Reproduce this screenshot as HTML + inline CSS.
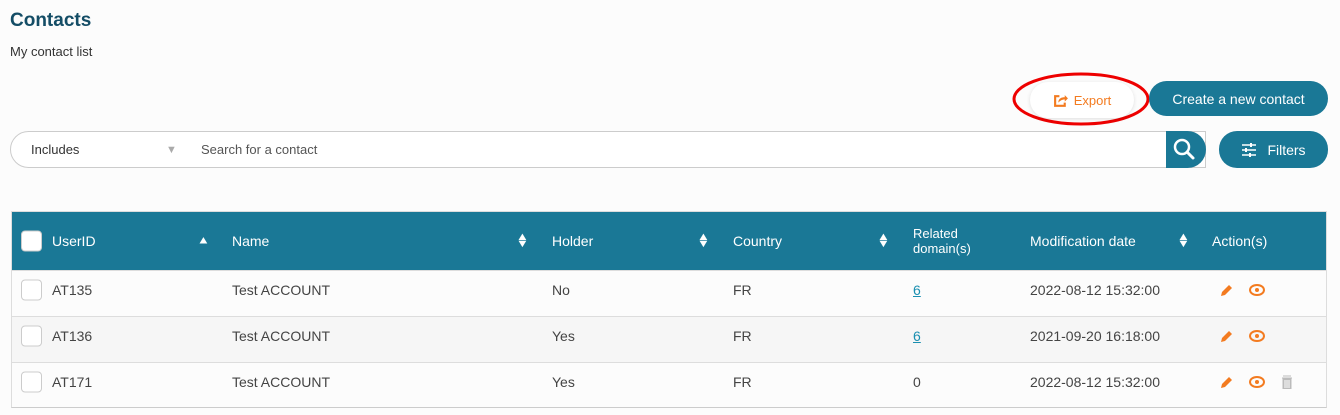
<!DOCTYPE html>
<html><head><meta charset="utf-8"><style>
*{box-sizing:border-box;margin:0;padding:0}
body{width:1340px;height:415px;background:#fcfcfc;font-family:"Liberation Sans",sans-serif;color:#333;position:relative;overflow:hidden}
.abs{position:absolute}
h1{position:absolute;left:10px;top:10px;font-size:19px;font-weight:bold;color:#144d66}
.sub{left:10px;top:44px;font-size:13px;color:#333}
.btn{position:absolute;border-radius:18px;font-size:14px;display:flex;align-items:center;justify-content:center}
.teal{background:#1a7896;color:#fff}
.search{left:10px;top:131px;width:1196px;height:37px;border:1px solid #ccc;border-radius:19px 0 0 19px;background:#fff}
.tbl{left:11px;top:211px;width:1316px;height:197px;border:1px solid #ddd;border-bottom:1px solid #ccc;background:#fcfcfc;overflow:hidden}
.hdr{position:absolute;left:0;top:0;width:100%;height:58px;background:#1a7896;color:#fff;font-size:14px}
.row{position:absolute;left:0;width:100%;height:46px;border-top:1px solid #ddd;font-size:14px;color:#444}
.c{position:absolute;top:50%;transform:translateY(-50%)}
.row .c{top:43%}
.cb{width:21px;height:21px;border-radius:4px;background:#fff;border:1px solid #ccc}
.sort{font-size:11px;line-height:7px;color:#fff;transform:translateY(-50%) scaleX(1.2)}
</style></head><body>
<h1>Contacts</h1>
<div class="abs sub">My contact list</div>
<svg class="abs" style="left:1011px;top:72px" width="140" height="55"><ellipse cx="70" cy="27" rx="67" ry="25" fill="none" stroke="#e00" stroke-width="3"/></svg>
<div class="btn" style="left:1030px;top:82px;width:104px;height:36px;background:#fff;box-shadow:0 1px 4px rgba(0,0,0,.12);color:#f37b20;font-size:13px">
<svg width="16" height="15" viewBox="0 0 15 14" style="margin-right:5px"><path d="M6 3H2v9h9V9" fill="none" stroke="#f37b20" stroke-width="2"/><path d="M5 9c0-4 3-5 6-5V2l3 3-3 3V6c-2 0-4 1-6 3z" fill="#f37b20"/></svg>Export</div>
<div class="btn teal" style="left:1149px;top:81px;width:179px;height:35px">Create a new contact</div>
<div class="abs search"><span class="abs" style="left:20px;top:10px;font-size:13px;color:#333">Includes</span><span class="abs" style="left:155px;top:12px;font-size:11px;color:#aaa">▼</span><span class="abs" style="left:190px;top:10px;font-size:13px;color:#555">Search for a contact</span></div>
<div class="abs" style="left:1166px;top:131px;width:40px;height:37px;background:#1a7896;border-radius:0 19px 19px 0"><svg width="40" height="37"><circle cx="16" cy="16" r="7" fill="none" stroke="#fff" stroke-width="2.5"/><path d="M21 21l6 6" stroke="#fff" stroke-width="3" stroke-linecap="round"/></svg></div>
<div class="btn teal" style="left:1219px;top:131px;width:109px;height:37px"><svg width="16" height="14" style="margin-right:10px"><path d="M1 2h14M1 7h14M1 12h14" stroke="#fff" stroke-width="1.5"/><path d="M10 0v4M5 5v4M9 10v4" stroke="#fff" stroke-width="2"/></svg>Filters</div>
<div class="abs tbl">
<div class="hdr">
<div class="c cb" style="left:9px"></div>
<span class="c" style="left:40px">UserID</span><span class="c sort" style="left:186px">▲</span>
<span class="c" style="left:220px">Name</span><span class="c sort" style="left:505px">▲<br>▼</span>
<span class="c" style="left:540px">Holder</span><span class="c sort" style="left:686px">▲<br>▼</span>
<span class="c" style="left:721px">Country</span><span class="c sort" style="left:866px">▲<br>▼</span>
<span class="c" style="left:901px;font-size:13px;line-height:15px">Related<br>domain(s)</span>
<span class="c" style="left:1018px">Modification date</span><span class="c sort" style="left:1166px">▲<br>▼</span>
<span class="c" style="left:1200px">Action(s)</span>
</div>
<div class="row" style="top:58px;background:#fcfcfc">
<div class="c cb" style="left:9px"></div><span class="c" style="left:40px">AT135</span><span class="c" style="left:220px">Test ACCOUNT</span><span class="c" style="left:540px">No</span><span class="c" style="left:721px">FR</span><span class="c" style="left:901px;color:#1a8fb0;text-decoration:underline">6</span><span class="c" style="left:1018px">2022-08-12 15:32:00</span>
<svg class="c" style="left:1207px" width="80" height="14"><path d="M2 13l1-4 7-7 3 3-7 7z" fill="#f37b20"/><ellipse cx="38" cy="7" rx="7" ry="5" fill="none" stroke="#f37b20" stroke-width="2"/><circle cx="38" cy="7" r="2" fill="#f37b20"/></svg></div>
<div class="row" style="top:104px;background:#f6f6f6">
<div class="c cb" style="left:9px"></div><span class="c" style="left:40px">AT136</span><span class="c" style="left:220px">Test ACCOUNT</span><span class="c" style="left:540px">Yes</span><span class="c" style="left:721px">FR</span><span class="c" style="left:901px;color:#1a8fb0;text-decoration:underline">6</span><span class="c" style="left:1018px">2021-09-20 16:18:00</span>
<svg class="c" style="left:1207px" width="80" height="14"><path d="M2 13l1-4 7-7 3 3-7 7z" fill="#f37b20"/><ellipse cx="38" cy="7" rx="7" ry="5" fill="none" stroke="#f37b20" stroke-width="2"/><circle cx="38" cy="7" r="2" fill="#f37b20"/></svg></div>
<div class="row" style="top:150px;background:#fcfcfc">
<div class="c cb" style="left:9px"></div><span class="c" style="left:40px">AT171</span><span class="c" style="left:220px">Test ACCOUNT</span><span class="c" style="left:540px">Yes</span><span class="c" style="left:721px">FR</span><span class="c" style="left:901px">0</span><span class="c" style="left:1018px">2022-08-12 15:32:00</span>
<svg class="c" style="left:1207px" width="80" height="14"><path d="M2 13l1-4 7-7 3 3-7 7z" fill="#f37b20"/><ellipse cx="38" cy="7" rx="7" ry="5" fill="none" stroke="#f37b20" stroke-width="2"/><circle cx="38" cy="7" r="2" fill="#f37b20"/><path d="M64 1h8M63 3h10M64 4h8v10h-8z" fill="#bbb" stroke="#bbb" stroke-width="1"/><rect x="65" y="5" width="6" height="8" fill="#ddd"/></svg></div>
</div>
</body></html>
